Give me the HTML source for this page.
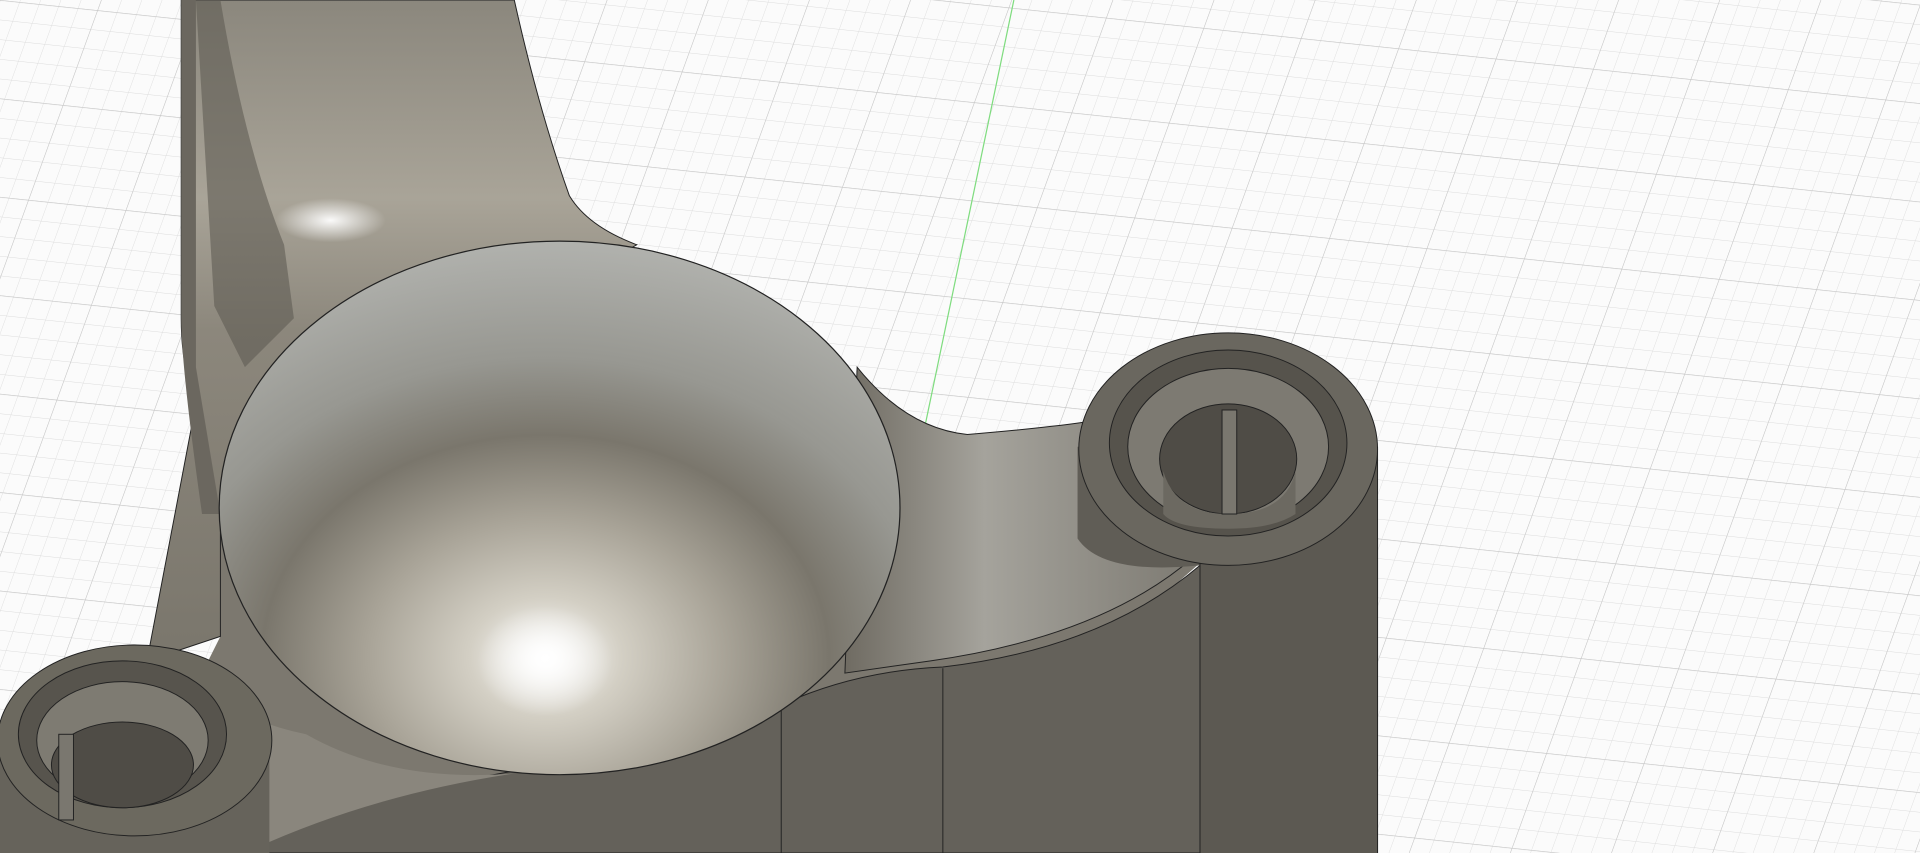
<!DOCTYPE html>
<html><head><meta charset="utf-8"><style>
html,body{margin:0;padding:0;width:1920px;height:853px;overflow:hidden;background:#fafafa}
svg{display:block}
</style></head><body>
<svg width="1920" height="853" viewBox="0 0 1568 697" preserveAspectRatio="none" xmlns="http://www.w3.org/2000/svg">
<defs>
<pattern id="g" width="16" height="16" patternUnits="userSpaceOnUse" patternTransform="rotate(6) skewX(-14)">
<path d="M0 0H16M0 0V16" stroke="#dcdcdc" stroke-width="0.7" fill="none"/>
</pattern>
<pattern id="G" width="80" height="80" patternUnits="userSpaceOnUse" patternTransform="rotate(6) skewX(-14)">
<path d="M0 0H80M0 0V80" stroke="#c6c6c6" stroke-width="0.9" fill="none"/>
</pattern>
<radialGradient id="dome" cx="0.48" cy="0.78" r="0.8">
<stop offset="0" stop-color="#ffffff"/>
<stop offset="0.14" stop-color="#d3cfc4"/>
<stop offset="0.33" stop-color="#a8a397"/>
<stop offset="0.52" stop-color="#7a766c"/>
<stop offset="0.7" stop-color="#979791"/>
<stop offset="1" stop-color="#b3b4b0"/>
</radialGradient>
<linearGradient id="arm" x1="0" y1="0" x2="0" y2="1">
<stop offset="0" stop-color="#8b877d"/>
<stop offset="0.3" stop-color="#a9a498"/>
<stop offset="0.5" stop-color="#8c877c"/>
<stop offset="1" stop-color="#7a766c"/>
</linearGradient>
<radialGradient id="hl" cx="0.5" cy="0.5" r="0.5">
<stop offset="0" stop-color="#fff" stop-opacity="0.95"/>
<stop offset="1" stop-color="#fff" stop-opacity="0"/>
</radialGradient>
<linearGradient id="rarm" x1="0" y1="0" x2="1" y2="0">
<stop offset="0" stop-color="#6f6b62"/>
<stop offset="0.4" stop-color="#a5a39c"/>
<stop offset="1" stop-color="#7d7a72"/>
</linearGradient>
</defs>
<rect width="1568" height="697" fill="#fbfbfb"/>
<rect width="1568" height="697" fill="url(#g)"/>
<rect width="1568" height="697" fill="url(#G)"/>
<line x1="828" y1="0" x2="755" y2="350" stroke="#7fdc7f" stroke-width="1"/>
<!-- filler under dome -->
<path d="M180 380 L600 300 L720 420 L980 460 L900 530 L640 580 L420 640 L200 697 L160 560 L180 520Z" fill="#7c786f"/>
<!-- left arm -->
<path d="M148 0 L420 0 Q440 90 465 160 Q480 185 520 200 L300 330 L180 420 L180 520 L120 540 L160 330 Q148 300 148 260 Z" fill="url(#arm)" stroke="#222" stroke-width="0.8"/>
<path d="M148 0 L160 0 L160 300 L180 420 L165 420 Q148 300 148 260Z" fill="#6b675f"/>
<path d="M180 0 Q200 120 232 200 L240 260 L200 300 L175 250 L160 0Z" fill="#5f5b53" opacity="0.6"/>
<ellipse cx="270" cy="180" rx="45" ry="18" fill="url(#hl)"/>
<!-- right arm -->
<path d="M700 300 Q740 350 790 355 Q850 350 885 345 L975 455 Q900 520 760 540 L690 550 Z" fill="url(#rarm)" stroke="#222" stroke-width="0.8"/>
<!-- lower front wall -->
<path d="M190 697 Q300 650 420 630 Q560 600 640 575 Q700 548 770 545 Q900 530 980 462 L1125 440 L1125 697Z" fill="#64615a" stroke="#222" stroke-width="0.8"/>
<path d="M160 560 Q200 590 250 600 Q320 640 420 632 Q300 650 200 697 L150 697Z" fill="#8a867d"/>
<line x1="638" y1="578" x2="638" y2="697" stroke="#222" stroke-width="0.8"/>
<line x1="770" y1="546" x2="770" y2="697" stroke="#222" stroke-width="0.8"/>
<line x1="980" y1="462" x2="980" y2="697" stroke="#222" stroke-width="0.8"/>
<!-- dome -->
<ellipse cx="457" cy="415" rx="278" ry="218" fill="url(#dome)" stroke="#222" stroke-width="1"/>
<ellipse cx="445" cy="540" rx="55" ry="45" fill="url(#hl)"/>
<!-- right cylinder -->
<path d="M880 365 L880 440 Q900 470 980 462 L1125 430 L1125 365Z" fill="#605d56"/>
<rect x="980" y="365" width="145" height="332" fill="#5c5952"/>
<line x1="980" y1="440" x2="980" y2="697" stroke="#222" stroke-width="0.8"/>
<line x1="1125" y1="365" x2="1125" y2="697" stroke="#222" stroke-width="0.8"/>
<ellipse cx="1003" cy="367" rx="122" ry="95" fill="#6a675f" stroke="#222" stroke-width="0.8"/>
<ellipse cx="1003" cy="362" rx="97" ry="76" fill="#56534c" stroke="#222" stroke-width="0.8"/>
<ellipse cx="1003" cy="365" rx="82" ry="64" fill="#7d7a72" stroke="#222" stroke-width="0.8"/>
<ellipse cx="1003" cy="375" rx="56" ry="45" fill="#4f4c46" stroke="#222" stroke-width="0.8"/>
<path d="M950 385 Q960 420 1003 420 Q1050 420 1058 385 L1058 420 Q1040 432 1003 432 Q960 432 950 420Z" fill="#6c6961"/>
<rect x="998" y="335" width="12" height="85" fill="#7a776f" stroke="#222" stroke-width="0.8"/>
<!-- bottom-left cylinder -->
<path d="M0 610 L0 697 L220 697 L220 610Z" fill="#66635b"/>
<ellipse cx="110" cy="605" rx="112" ry="78" fill="#6c695f" stroke="#222" stroke-width="0.8"/>
<ellipse cx="100" cy="600" rx="85" ry="60" fill="#57544d" stroke="#222" stroke-width="0.8"/>
<ellipse cx="100" cy="605" rx="70" ry="48" fill="#7e7b72" stroke="#222" stroke-width="0.8"/>
<ellipse cx="100" cy="625" rx="58" ry="35" fill="#4f4c46" stroke="#222" stroke-width="0.8"/>
<rect x="48" y="600" width="12" height="70" fill="#7a776f" stroke="#222" stroke-width="0.8"/>
</svg>
</body></html>
